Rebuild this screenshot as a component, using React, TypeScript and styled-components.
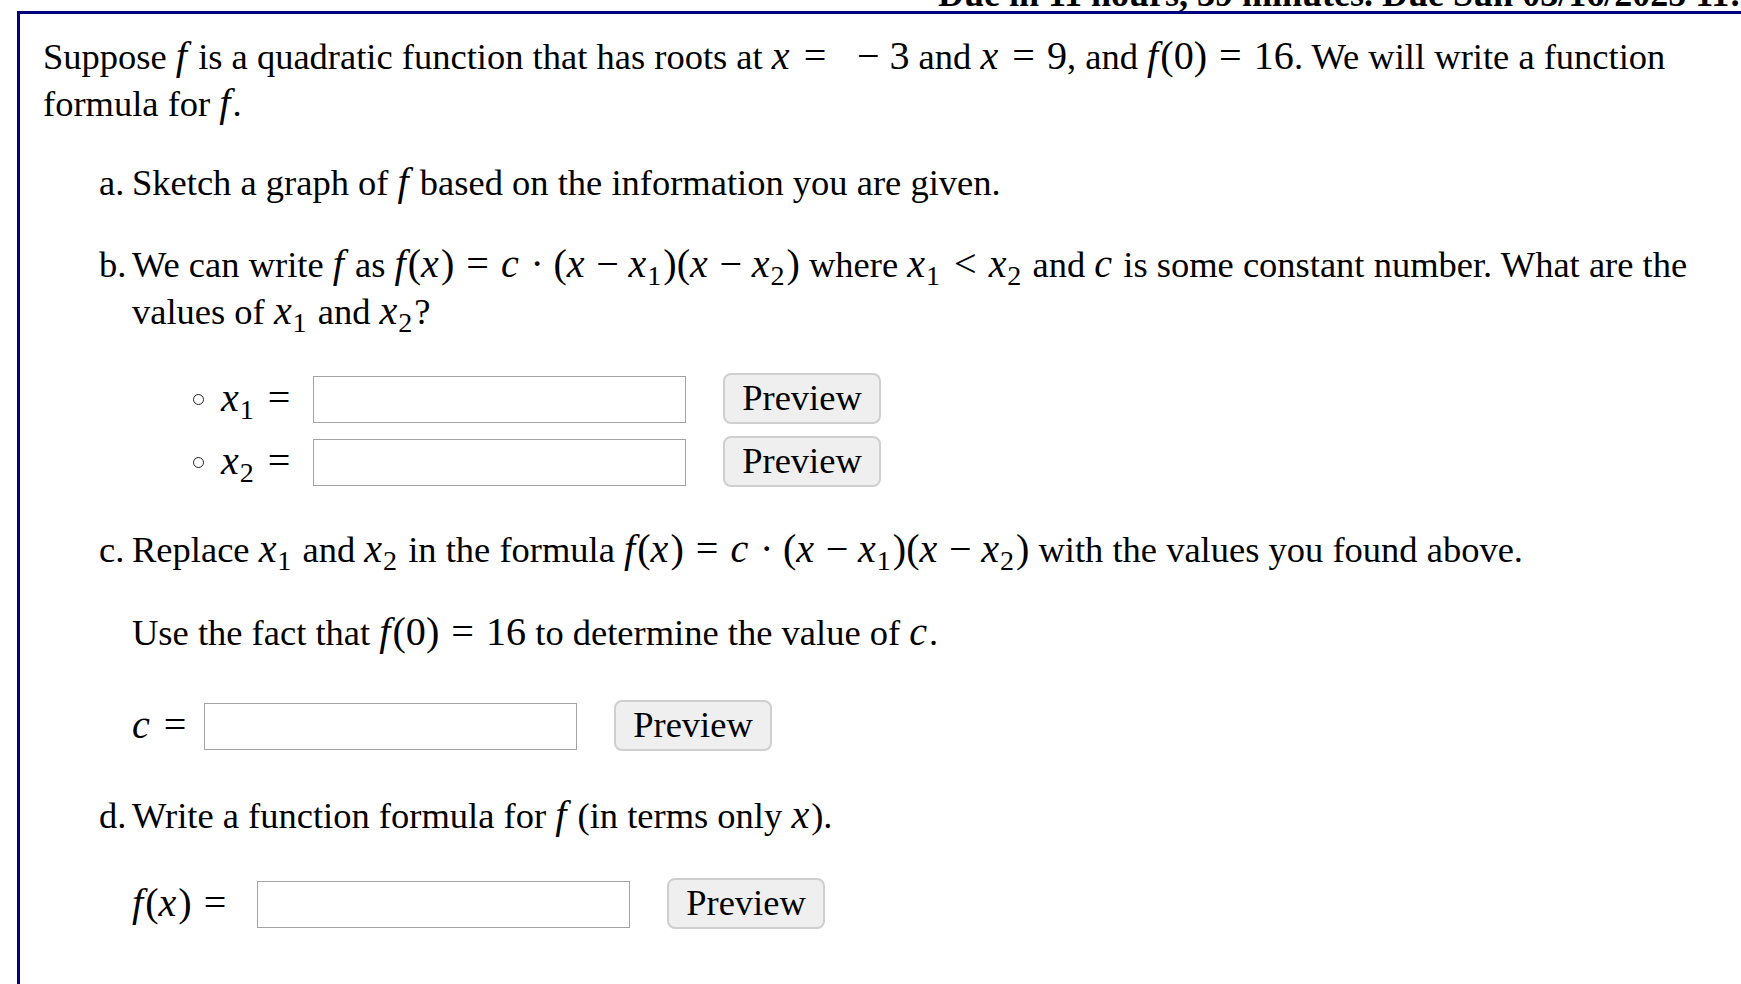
import React from "react";
import styled, { createGlobalStyle } from "styled-components";

const GlobalStyle = createGlobalStyle`
  html, body {
    margin: 0;
    padding: 0;
    background: #fff;
    overflow: hidden;
  }
  body {
    font-family: "Liberation Serif", "Times New Roman", serif;
    color: #000;
  }
`;

const Page = styled.div`
  width: 1741px;
  height: 984px;
  overflow: hidden;
`;

// due-date line, only its bottom edge is still on screen
const DueBar = styled.div`
  height: 11px;
  overflow: hidden;
`;

const DueText = styled.div`
  margin-top: -26px;
  padding-left: 938px;
  font-size: 36px;
  line-height: 40px;
  font-weight: bold;
  white-space: nowrap;
`;

const ProblemBox = styled.div`
  margin-left: 17px;
  border-top: 3px solid #00007f;
  border-left: 3px solid #00007f;
  padding: 19px 0 0 23px;
  min-height: 984px;
  font-size: 36.5px;
  line-height: 47px;
  white-space: nowrap;
`;

const Para = styled.p<{ $top?: number }>`
  margin: ${(p) => p.$top ?? 0}px 0 0;
`;

const ItemList = styled.ol`
  list-style: none;
  margin: 32px 0 0;
  padding: 0 0 0 56px;
`;

const Item = styled.li<{ $top?: number }>`
  display: grid;
  grid-template-columns: 33px auto;
  margin-top: ${(p) => p.$top ?? 0}px;
`;

const ItemLabel = styled.span``;

const ItemBody = styled.div``;

const SubList = styled.ul`
  list-style: none;
  margin: 38px 0 0;
  padding: 0 0 0 61px;
  display: flex;
  flex-direction: column;
  gap: 12px;
`;

const AnswerRow = styled.div<{ $top?: number }>`
  display: flex;
  align-items: center;
  margin-top: ${(p) => p.$top ?? 0}px;
`;

const SubRow = styled.li`
  display: flex;
  align-items: center;
`;

const Bullet = styled.span`
  width: 9px;
  height: 9px;
  border: 1.5px solid #222;
  border-radius: 50%;
  margin-right: 17px;
  margin-top: 2px;
  flex: none;
`;

const RowLabel = styled.span<{ $w: number }>`
  width: ${(p) => p.$w}px;
  flex: none;
`;

const AnswerInput = styled.input`
  width: 373px;
  height: 47px;
  box-sizing: border-box;
  border: 1px solid #a3a3a3;
  margin: 2px 37px 0 0;
  padding: 0 6px;
  font-size: 24px;
  background: #fff;
  outline: none;
`;

const PreviewButton = styled.button`
  width: 158px;
  height: 51px;
  box-sizing: border-box;
  border: 2px solid #cfcfcf;
  border-radius: 8px;
  background: #efefef;
  color: #000;
  font-family: "Liberation Serif", "Times New Roman", serif;
  font-size: 36.5px;
  line-height: 1;
  padding: 0;
  cursor: pointer;
`;

// math bits, spaced the way MathJax lays them out
const Mi = styled.span`
  font-style: italic;
  font-family: "Liberation Serif", "DejaVu Serif", serif;
  font-size: 1.1em;
  line-height: 0;
  padding-right: 0.05em;
`;

const Mp = styled.span`
  font-size: 1.1em;
  line-height: 0;
`;

const Mo = styled.span<{ $rel?: boolean }>`
  font-size: 1.1em;
  line-height: 0;
  padding: 0 ${(p) => (p.$rel ? "0.3em" : "0.24em")};
`;

const Sub = styled.span`
  font-style: normal;
  font-size: 0.7em;
  position: relative;
  top: 0.3em;
  line-height: 0;
  padding-left: 0.03em;
`;

const X = ({ n }: { n?: number }) => (
  <Mi>
    x{n !== undefined && <Sub>{n}</Sub>}
  </Mi>
);

const F = () => <Mi>f</Mi>;
const C = () => <Mi>c</Mi>;

const Eq = () => <Mo $rel>=</Mo>;

const Call = ({ children }: { children: React.ReactNode }) => (
  <>
    <Mp>(</Mp>
    {children}
    <Mp>)</Mp>
  </>
);

const Factored = () => (
  <>
    <F />
    <Call>
      <X />
    </Call>
    <Eq />
    <C />
    <Mo>·</Mo>
    <Call>
      <X />
      <Mo>−</Mo>
      <X n={1} />
    </Call>
    <Call>
      <X />
      <Mo>−</Mo>
      <X n={2} />
    </Call>
  </>
);

function App() {
  return (
    <Page>
      <GlobalStyle />
      <DueBar>
        <DueText>Due in 11 hours, 39 minutes. Due Sun 03/16/2025 11:59pm MDT</DueText>
      </DueBar>
      <ProblemBox>
        <Para>
          Suppose <F /> is a quadratic function that has roots at <X />
          <Eq /> <Mo>−</Mo>
          <Mp>3</Mp> and <X />
          <Eq />
          <Mp>9</Mp>, and <F />
          <Call>
            <Mp>0</Mp>
          </Call>
          <Eq />
          <Mp>16</Mp>. We will write a function
          <br />
          formula for <F />.
        </Para>

        <ItemList>
          <Item>
            <ItemLabel>a.</ItemLabel>
            <ItemBody>
              Sketch a graph of <F /> based on the information you are given.
            </ItemBody>
          </Item>

          <Item $top={35}>
            <ItemLabel>b.</ItemLabel>
            <ItemBody>
              We can write <F /> as <Factored /> where <X n={1} />
              <Mo $rel>&lt;</Mo>
              <X n={2} /> and <C /> is some constant number. What are the
              <br />
              values of <X n={1} /> and <X n={2} />?
              <SubList>
                {[1, 2].map((n) => (
                  <SubRow key={n}>
                    <Bullet />
                    <RowLabel $w={92}>
                      <X n={n} />
                      <Eq />
                    </RowLabel>
                    <AnswerInput type="text" />
                    <PreviewButton type="button">Preview</PreviewButton>
                  </SubRow>
                ))}
              </SubList>
            </ItemBody>
          </Item>

          <Item $top={39}>
            <ItemLabel>c.</ItemLabel>
            <ItemBody>
              Replace <X n={1} /> and <X n={2} /> in the formula <Factored /> with the values you
              found above.
              <Para $top={36}>
                Use the fact that <F />
                <Call>
                  <Mp>0</Mp>
                </Call>
                <Eq />
                <Mp>16</Mp> to determine the value of <C />.
              </Para>
              <AnswerRow $top={44}>
                <RowLabel $w={72}>
                  <C />
                  <Eq />
                </RowLabel>
                <AnswerInput type="text" />
                <PreviewButton type="button">Preview</PreviewButton>
              </AnswerRow>
            </ItemBody>
          </Item>

          <Item $top={41}>
            <ItemLabel>d.</ItemLabel>
            <ItemBody>
              Write a function formula for <F /> (in terms only <X />
              ).
              <AnswerRow $top={39}>
                <RowLabel $w={125}>
                  <F />
                  <Call>
                    <X />
                  </Call>
                  <Eq />
                </RowLabel>
                <AnswerInput type="text" />
                <PreviewButton type="button">Preview</PreviewButton>
              </AnswerRow>
            </ItemBody>
          </Item>
        </ItemList>
      </ProblemBox>
    </Page>
  );
}

export default App;
